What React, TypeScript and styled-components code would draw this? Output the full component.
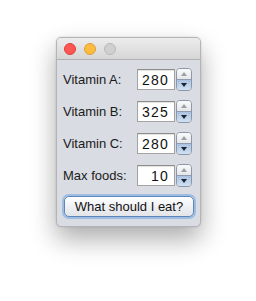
import styled, { createGlobalStyle } from "styled-components"

const Global = createGlobalStyle`
    html, body {
        margin: 0;
        padding: 0;
        background: #ffffff;
    }
    body {
        font-family: "Liberation Sans", Arial, sans-serif;
    }
`

const Stage = styled.div`
    width: 256px;
    height: 301px;
    padding: 37px 0 0 56px;
    box-sizing: border-box;
    background: #ffffff;
`

const Window = styled.div`
    width: 145px;
    height: 190px;
    box-sizing: border-box;
    border: 1px solid #b4b4b6;
    border-radius: 5px;
    overflow: hidden;
    background: #d9dce2;
    box-shadow: 0 12px 26px rgba(0, 0, 0, 0.33), 0 0 2px rgba(0, 0, 0, 0.15);
    display: flex;
    flex-direction: column;
`

const TitleBar = styled.div`
    height: 22px;
    flex: none;
    box-sizing: border-box;
    display: flex;
    align-items: center;
    gap: 8px;
    padding-left: 7px;
    background: linear-gradient(to bottom, #ececec, #d6d6d6);
    border-bottom: 1px solid #b1b1b1;
`

const Light = styled.span<{ $fill: string; $edge: string }>`
    width: 12px;
    height: 12px;
    border-radius: 50%;
    box-sizing: border-box;
    background: ${p => p.$fill};
    border: 1px solid ${p => p.$edge};
`

const Content = styled.div`
    padding: 8px 8px 0 6px;
    display: flex;
    flex-direction: column;
    gap: 10px;
`

const Row = styled.div`
    display: grid;
    grid-template-columns: 74px 38px 17px;
    align-items: center;
    height: 22px;
`

const Label = styled.label`
    font-size: 13px;
    color: #1a1a1a;
`

const Field = styled.div`
    height: 21px;
    box-sizing: border-box;
    background: #ffffff;
    border: 1px solid #a3a3a3;
    border-top-color: #8c8c8c;
    box-shadow: inset 0 1px 1px rgba(0, 0, 0, 0.12);
    display: flex;
    align-items: center;
    justify-content: flex-end;
    padding-right: 5px;
    font-size: 14px;
    letter-spacing: 1.2px;
    color: #111;
`

const Stepper = styled.div`
    margin-left: 1px;
    height: 23px;
    box-sizing: border-box;
    border: 1px solid #8e97a5;
    border-radius: 4px;
    overflow: hidden;
    display: flex;
    flex-direction: column;
`

const StepHalf = styled.div<{ $down?: boolean }>`
    flex: 1;
    display: flex;
    align-items: center;
    justify-content: center;
    background: ${p => p.$down
        ? "linear-gradient(to bottom, #a9c3e2, #cfe0f2)"
        : "linear-gradient(to bottom, #fbfbfb, #e4e6ea)"};
    border-top: ${p => p.$down ? "1px solid #8e9bb0" : "none"};
`

const Arrow = styled.span<{ $down?: boolean }>`
    width: 0;
    height: 0;
    border-left: 3px solid transparent;
    border-right: 3px solid transparent;
    ${p => p.$down
        ? "border-top: 4px solid #1c2530;"
        : "border-bottom: 4px solid #9a9ea6;"}
`

const Button = styled.button`
    width: 130px;
    height: 21px;
    box-sizing: border-box;
    border-radius: 5px;
    border: 1px solid #5d86bc;
    background: linear-gradient(to bottom, #ffffff, #eceef2 60%, #e2e4e8);
    box-shadow: 0 0 0 2px #9ebde0;
    margin-left: 1px;
    font-family: "Liberation Sans", Arial, sans-serif;
    font-size: 13px;
    color: #111;
    padding: 0;
`

const fields = [
    { label: "Vitamin A:", value: "280" },
    { label: "Vitamin B:", value: "325" },
    { label: "Vitamin C:", value: "280" },
    { label: "Max foods:", value: "10" },
]

export default function App() {
    return (
        <>
            <Global />
            <Stage>
                <Window>
                    <TitleBar>
                        <Light $fill="#fc5753" $edge="#df3e3a" />
                        <Light $fill="#fdbc40" $edge="#de9f34" />
                        <Light $fill="#d0d0d0" $edge="#b9b9b9" />
                    </TitleBar>
                    <Content>
                        {fields.map(f => (
                            <Row key={f.label}>
                                <Label>{f.label}</Label>
                                <Field>{f.value}</Field>
                                <Stepper>
                                    <StepHalf><Arrow /></StepHalf>
                                    <StepHalf $down><Arrow $down /></StepHalf>
                                </Stepper>
                            </Row>
                        ))}
                        <Button>What should I eat?</Button>
                    </Content>
                </Window>
            </Stage>
        </>
    )
}
